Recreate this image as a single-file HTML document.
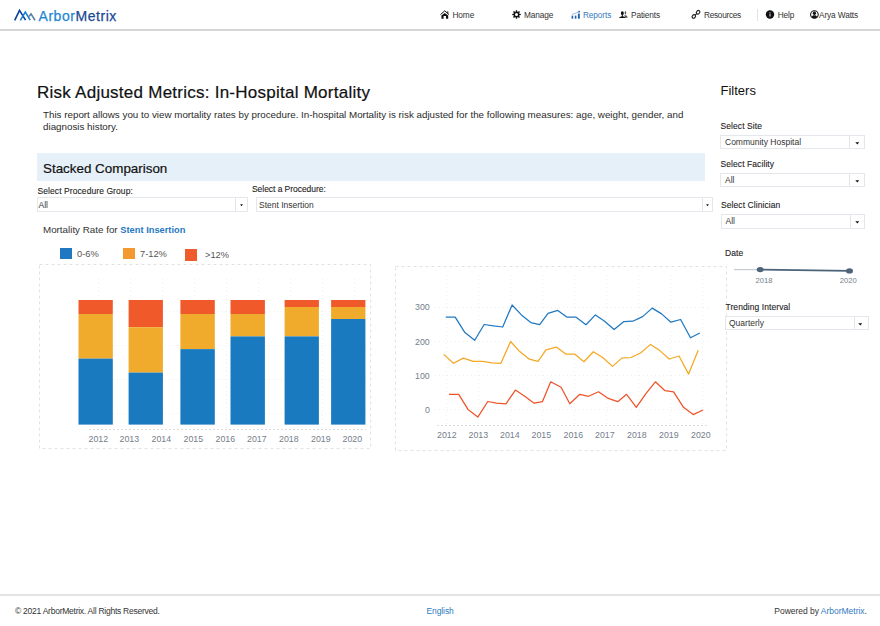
<!DOCTYPE html>
<html><head><meta charset="utf-8">
<style>
*{margin:0;padding:0;box-sizing:border-box}
html,body{width:880px;height:626px;overflow:hidden;background:#fff;font-family:"Liberation Sans",sans-serif;color:#222}
.a{position:absolute;white-space:nowrap}
#hdr{position:absolute;left:0;top:0;width:880px;height:29px;background:#fff}
#hdrline{position:absolute;left:0;top:29px;width:880px;height:2px;background:#d6d6d6}
.nav{position:absolute;top:10px;font-size:8.3px;letter-spacing:-0.12px;color:#333;line-height:10px}
.sel{position:absolute;border:1px solid #e4e8ec;background:#fff}
.sel .sep{position:absolute;top:0;bottom:0;width:1px;background:#e2e6ea}
.sel .arr{position:absolute}
.lbl{position:absolute;font-size:8.5px;color:#222;line-height:10px;-webkit-text-stroke:0.1px #222;letter-spacing:0.08px}
.stxt{position:absolute;font-size:8.5px;color:#333;line-height:10px}
.yr{position:absolute;font-size:8.8px;color:#737e8a;line-height:10px}
</style></head><body>
<div id="hdr">
  <svg class="a" style="left:12px;top:7px" width="26" height="16" viewBox="12 7 26 16">
    <polyline points="14.7,20.3 19.5,10.4 25.6,20.2" fill="none" stroke="#0b3d9c" stroke-width="1.6"/>
    <polyline points="20.3,20.3 25.3,12.1 30.2,20.2" fill="none" stroke="#1b82d2" stroke-width="1.6"/>
    <polyline points="29.1,16.4 31,13.9 35,20.2" fill="none" stroke="#5f7f9f" stroke-width="1.6"/>
  </svg>
  <div class="a" style="left:38.5px;top:6.5px;font-size:14px;line-height:18px;letter-spacing:0.55px;-webkit-text-stroke:0.25px currentColor"><span style="color:#1f86d4;-webkit-text-stroke:0.25px #1f86d4">Arbor</span><span style="color:#1a4893;-webkit-text-stroke:0.25px #1a4893">Metrix</span></div>

  <!-- nav -->
  <svg class="a" style="left:438px;top:6px" width="20" height="18" viewBox="438 6 20 18"><path d="M440.5 14.6 L444.75 10.8 L449 14.6" fill="none" stroke="#111" stroke-width="1"/><rect x="447.3" y="11.3" width="1" height="2" fill="#111"/><path d="M441.4 18.7 L441.4 15.4 L444.75 12.9 L448.2 15.4 L448.2 18.7 L446 18.7 L446 15.9 L443.6 15.9 L443.6 18.7 Z" fill="#111"/></svg>
  <div class="nav" style="left:452.5px">Home</div>
  <svg class="a" style="left:511.8px;top:10.2px" width="9" height="9" viewBox="-4.5 -4.5 9 9"><g fill="#111"><circle r="2.75"/><g id="tt"><path d="M-0.6 -4.3 L0.6 -4.3 L1 -2.3 L-1 -2.3 Z"/></g><use href="#tt" transform="rotate(45)"/><use href="#tt" transform="rotate(90)"/><use href="#tt" transform="rotate(135)"/><use href="#tt" transform="rotate(180)"/><use href="#tt" transform="rotate(225)"/><use href="#tt" transform="rotate(270)"/><use href="#tt" transform="rotate(315)"/></g><circle r="1.5" fill="#fff"/></svg>
  <div class="nav" style="left:524px">Manage</div>
  <svg class="a" style="left:568px;top:6px" width="20" height="18" viewBox="568 6 20 18"><g fill="#1f63ad"><rect x="571.6" y="15.6" width="1.6" height="3.1"/><rect x="574.8" y="15.6" width="1.6" height="3.1"/><rect x="577.9" y="13.6" width="1.9" height="5.1"/><rect x="578.2" y="10.9" width="1.7" height="1.6"/></g><polyline points="572.2,14.3 575,13.5 577,12.6 578.8,11.6" fill="none" stroke="#7fa6d0" stroke-width="0.8"/></svg>
  <div class="nav" style="left:583px;color:#3a7cc0">Reports</div>
  <svg class="a" style="left:615px;top:6px" width="20" height="18" viewBox="615 6 20 18"><path d="M626.2 12.6 C626.2 11.8 625.9 11.3 625.4 11.3 C624.9 11.3 624.7 11.9 624.7 12.8 C624.7 13.7 625 14.6 625.5 14.6 C626 14.6 626.2 13.6 626.2 12.6 Z M624 15.6 L626 15.2 C627 15.6 627.5 16.4 627.6 17.7 L625.5 17.7 Z" fill="#555"/><path d="M622.3 11.2 C621.3 11.2 620.9 12 620.9 13.1 C620.9 14.3 621.5 15.2 621.9 15.4 L621.9 16.2 C620.6 16.5 619.4 17 619.1 17.9 L625.6 17.9 C625.3 17 624.1 16.5 622.8 16.2 L622.8 15.4 C623.2 15.2 623.8 14.3 623.8 13.1 C623.8 12 623.3 11.2 622.3 11.2 Z" fill="#111"/></svg>
  <div class="nav" style="left:631px">Patients</div>
  <svg class="a" style="left:688px;top:6px" width="20" height="18" viewBox="688 6 20 18"><g fill="none" stroke="#222" stroke-width="1.15"><ellipse cx="693.8" cy="16.4" rx="1.9" ry="1.55" transform="rotate(-45 693.8 16.4)"/><ellipse cx="698.1" cy="12.3" rx="1.9" ry="1.55" transform="rotate(-45 698.1 12.3)"/><line x1="695" y1="15.2" x2="696.8" y2="13.6"/></g></svg>
  <div class="nav" style="left:704px;letter-spacing:-0.3px">Resources</div>
  <div class="a" style="left:757px;top:9px;width:1px;height:12px;background:#e3e3e3"></div>
  <svg class="a" style="left:762px;top:6px" width="20" height="18" viewBox="762 6 20 18"><circle cx="770" cy="14.5" r="4.2" fill="#111"/><rect x="769.5" y="12.3" width="1" height="1.1" fill="#ddd"/><rect x="769.5" y="13.9" width="1" height="2.6" fill="#ddd"/></svg>
  <div class="nav" style="left:777.7px">Help</div>
  <svg class="a" style="left:805px;top:6px" width="20" height="18" viewBox="805 6 20 18"><circle cx="814.4" cy="14.5" r="3.8" fill="none" stroke="#111" stroke-width="1.1"/><ellipse cx="814.4" cy="13.2" rx="1.6" ry="1.8" fill="#111"/><path d="M811.6 17.3 C812 15.8 813.1 15.3 814.4 15.3 C815.7 15.3 816.8 15.8 817.2 17.3 C816.5 18 815.5 18.3 814.4 18.3 C813.3 18.3 812.3 18 811.6 17.3 Z" fill="#111"/></svg>
  <div class="nav" style="left:819px">Arya Watts</div>
</div>
<div id="hdrline"></div>

<!-- title -->
<div class="a" style="left:37px;top:82.5px;font-size:17px;letter-spacing:0.25px;line-height:20px;color:#111;-webkit-text-stroke:0.2px #111">Risk Adjusted Metrics: In-Hospital Mortality</div>
<div class="a" style="left:43px;top:108.6px;font-size:9.8px;line-height:12px;color:#2b2b2b;white-space:normal;width:660px">This report allows you to view mortality rates by procedure. In-hospital Mortality is risk adjusted for the following measures: age, weight, gender, and<br>diagnosis history.</div>

<!-- section -->
<div class="a" style="left:37px;top:153px;width:668px;height:28px;background:#e6f0f8"></div>
<div class="a" style="left:43px;top:160.5px;font-size:13.4px;line-height:16px;color:#111;-webkit-text-stroke:0.2px #111">Stacked Comparison</div>

<div class="lbl" style="left:37.5px;top:186px">Select Procedure Group:</div>
<div class="sel" style="left:37px;top:197px;width:211px;height:15px"><div class="sep" style="left:196.5px"></div><svg class="arr" style="left:200.8px;top:5px" width="5" height="5" viewBox="0 0 5 5"><polygon points="1.1,1.3 3.9,1.3 2.5,3.2" fill="#111"/></svg></div>
<div class="stxt" style="left:38.5px;top:199.5px">All</div>
<div class="lbl" style="left:252px;top:183.5px;letter-spacing:-0.05px">Select a Procedure:</div>
<div class="sel" style="left:256px;top:197px;width:457px;height:15px"><div class="sep" style="left:445px"></div><svg class="arr" style="left:448px;top:5px" width="5" height="5" viewBox="0 0 5 5"><polygon points="1.1,1.3 3.9,1.3 2.5,3.2" fill="#111"/></svg></div>
<div class="stxt" style="left:259px;top:199.5px">Stent Insertion</div>

<div class="a" style="left:43px;top:224px;font-size:9.8px;line-height:12px;color:#333">Mortality Rate for <b style="color:#1f78c1;font-size:9.3px">Stent Insertion</b></div>

<!-- legend -->
<div class="a" style="left:60px;top:248px;width:12px;height:11px;background:#1f78c1"></div>
<div class="a" style="left:77px;top:248px;font-size:9.3px;line-height:12px;color:#555">0-6%</div>
<div class="a" style="left:123px;top:248px;width:12px;height:11px;background:#f3992f"></div>
<div class="a" style="left:140px;top:248px;font-size:9.3px;line-height:12px;color:#555">7-12%</div>
<div class="a" style="left:185px;top:249px;width:12px;height:11.5px;background:#f05b2b"></div>
<div class="a" style="left:205px;top:249px;font-size:9.3px;line-height:12px;color:#555">&gt;12%</div>

<!-- bar chart -->
<svg class="a" style="left:0;top:0" width="880" height="626">
  <rect x="39.5" y="264.5" width="331" height="184" fill="none" stroke="#e2e2e2" stroke-width="1" stroke-dasharray="3,3"/>
  <g stroke="#efefef" stroke-width="1" stroke-dasharray="1,3">
    <line x1="98.5" y1="279" x2="98.5" y2="429"/>
    <line x1="130.5" y1="279" x2="130.5" y2="429"/>
    <line x1="162.5" y1="279" x2="162.5" y2="429"/>
    <line x1="194.5" y1="279" x2="194.5" y2="429"/>
    <line x1="226.5" y1="279" x2="226.5" y2="429"/>
    <line x1="258.5" y1="279" x2="258.5" y2="429"/>
    <line x1="290.5" y1="279" x2="290.5" y2="429"/>
    <line x1="322.5" y1="279" x2="322.5" y2="429"/>
    <line x1="354.5" y1="279" x2="354.5" y2="429"/>
    <line x1="89" y1="311.5" x2="366" y2="311.5"/>
    <line x1="89" y1="345.5" x2="366" y2="345.5"/>
    <line x1="89" y1="379.5" x2="366" y2="379.5"/>
    <line x1="89" y1="413.5" x2="366" y2="413.5"/>
  </g>
  <line x1="89" y1="429.5" x2="366" y2="429.5" stroke="#dcdcdc" stroke-width="1" stroke-dasharray="2,2"/>
  <!-- bars: x, w, top, r/o, o/b, bottom -->
  <g>
    <rect x="78.5" y="300" width="34.3" height="14" fill="#f05a2b"/>
    <rect x="78.5" y="314" width="34.3" height="44.6" fill="#f0ab2c"/>
    <rect x="78.5" y="358.6" width="34.3" height="66" fill="#1a7abf"/>

    <rect x="128.6" y="300" width="34.3" height="27.2" fill="#f05a2b"/>
    <rect x="128.6" y="327.2" width="34.3" height="45.4" fill="#f0ab2c"/>
    <rect x="128.6" y="372.6" width="34.3" height="52" fill="#1a7abf"/>

    <rect x="180.4" y="300" width="34.4" height="14" fill="#f05a2b"/>
    <rect x="180.4" y="314" width="34.4" height="35.1" fill="#f0ab2c"/>
    <rect x="180.4" y="349.1" width="34.4" height="75.5" fill="#1a7abf"/>

    <rect x="230.5" y="300" width="34.4" height="14" fill="#f05a2b"/>
    <rect x="230.5" y="314" width="34.4" height="22.4" fill="#f0ab2c"/>
    <rect x="230.5" y="336.4" width="34.4" height="88.2" fill="#1a7abf"/>

    <rect x="284.6" y="300" width="34.3" height="7" fill="#f05a2b"/>
    <rect x="284.6" y="307" width="34.3" height="29.4" fill="#f0ab2c"/>
    <rect x="284.6" y="336.4" width="34.3" height="88.2" fill="#1a7abf"/>

    <rect x="331.1" y="300" width="34.3" height="7" fill="#f05a2b"/>
    <rect x="331.1" y="307" width="34.3" height="12" fill="#f0ab2c"/>
    <rect x="331.1" y="319" width="34.3" height="105.6" fill="#1a7abf"/>
  </g>

  <!-- line chart container -->
  <rect x="395.5" y="266.5" width="331" height="184" fill="none" stroke="#e2e2e2" stroke-width="1" stroke-dasharray="3,3"/>
  <g stroke="#efefef" stroke-width="1" stroke-dasharray="1,3">
    <line x1="446.5" y1="275" x2="446.5" y2="424"/>
    <line x1="478.5" y1="275" x2="478.5" y2="424"/>
    <line x1="510.5" y1="275" x2="510.5" y2="424"/>
    <line x1="542.5" y1="275" x2="542.5" y2="424"/>
    <line x1="574.5" y1="275" x2="574.5" y2="424"/>
    <line x1="606.5" y1="275" x2="606.5" y2="424"/>
    <line x1="638.5" y1="275" x2="638.5" y2="424"/>
    <line x1="670.5" y1="275" x2="670.5" y2="424"/>
    <line x1="702.5" y1="275" x2="702.5" y2="424"/>
    <line x1="435" y1="307.5" x2="708" y2="307.5"/>
    <line x1="435" y1="341.5" x2="708" y2="341.5"/>
    <line x1="435" y1="375.5" x2="708" y2="375.5"/>
    <line x1="435" y1="409.5" x2="708" y2="409.5"/>
  </g>
  <line x1="437" y1="425.5" x2="708" y2="425.5" stroke="#dcdcdc" stroke-width="1" stroke-dasharray="2,2"/>
  <polyline fill="none" stroke="#1f78c1" stroke-width="1.25" stroke-linejoin="round" points="445.8,317.2 455.2,317.2 464.9,332.6 474.7,340.3 484.2,324.5 493.6,325.9 502.7,327 512.1,305 521.4,314.9 530.8,322.6 539.7,324.7 548,313.3 557.8,310.4 567.1,317.2 576.1,317.2 586,324.7 595.4,314.9 604.6,321.2 614.1,329.5 623.9,321.6 632.8,321.2 642.6,316.6 652.2,308.1 661.6,313.9 670.9,322.2 680.6,319.5 690.5,337.8 699.8,333"/>
  <polyline fill="none" stroke="#f4a823" stroke-width="1.25" stroke-linejoin="round" points="443.7,354.4 453.5,363.3 463.3,358.1 473.2,361.4 482.6,361.4 491.9,362.9 500.9,363.3 510.6,341.5 519.5,351.3 529.3,359.2 538,361.4 546,349.8 556.3,347.1 565.7,354 574.6,354 584,361.7 593.3,351.7 602.7,357.5 612.5,366.4 621.8,358.1 631.2,357.5 640.9,352.7 650.5,344.4 659.8,350.6 669.2,359 679,356 688.6,374.1 698.2,350.2"/>
  <polyline fill="none" stroke="#f0532a" stroke-width="1.25" stroke-linejoin="round" points="448.9,394.3 458.7,394.3 468,409.4 477.8,417.1 487.8,401.5 496.5,403.2 506,403.8 515.4,390.1 524.7,396.3 534.1,403.2 542.4,401.7 550.7,381.8 561.1,387.2 569.8,403.8 579.8,394.3 588.5,396.3 598.5,391.8 608.3,398.4 617.7,401.7 626.6,394.3 636.3,407.3 645.7,393.8 655.4,381.8 665,390.7 673.6,391.8 683.5,407.3 693.2,414.6 703,410"/>

  <!-- slider -->
  <line x1="734" y1="269.6" x2="760" y2="269.6" stroke="#c9cdd1" stroke-width="1.3"/>
  <line x1="760" y1="269.6" x2="849.5" y2="270.9" stroke="#4a6379" stroke-width="1.6"/>
  <ellipse cx="760.2" cy="269.6" rx="3.5" ry="2.7" fill="#4d657a"/>
  <ellipse cx="849.5" cy="270.9" rx="3.5" ry="2.7" fill="#4d657a"/>
</svg>

<!-- bar chart x labels -->
<div class="yr" style="left:88.5px;top:434px">2012</div>
<div class="yr" style="left:119.5px;top:434px">2013</div>
<div class="yr" style="left:151.5px;top:434px">2014</div>
<div class="yr" style="left:183.5px;top:434px">2015</div>
<div class="yr" style="left:215.5px;top:434px">2016</div>
<div class="yr" style="left:247px;top:434px">2017</div>
<div class="yr" style="left:279px;top:434px">2018</div>
<div class="yr" style="left:311px;top:434px">2019</div>
<div class="yr" style="left:342.5px;top:434px">2020</div>

<!-- line chart labels -->
<div class="yr" style="left:415px;top:302px">300</div>
<div class="yr" style="left:415px;top:336.5px">200</div>
<div class="yr" style="left:415px;top:371px">100</div>
<div class="yr" style="left:425px;top:405px">0</div>
<div class="yr" style="left:437px;top:430px">2012</div>
<div class="yr" style="left:468.5px;top:430px">2013</div>
<div class="yr" style="left:500px;top:430px">2014</div>
<div class="yr" style="left:531.5px;top:430px">2015</div>
<div class="yr" style="left:563.5px;top:430px">2016</div>
<div class="yr" style="left:595px;top:430px">2017</div>
<div class="yr" style="left:627px;top:430px">2018</div>
<div class="yr" style="left:659px;top:430px">2019</div>
<div class="yr" style="left:691px;top:430px">2020</div>

<!-- filters -->
<div class="a" style="left:720.5px;top:83px;font-size:13px;line-height:15px;color:#111">Filters</div>
<div class="lbl" style="left:720.5px;top:120.5px">Select Site</div>
<div class="sel" style="left:720px;top:134.5px;width:145px;height:14.5px"><div class="sep" style="left:128px"></div><svg class="arr" style="left:133.5px;top:5.0px" width="6" height="5" viewBox="0 0 6 5"><polygon points="0.3,1.2 4.3,1.2 2.3,3.6" fill="#111"/></svg></div>
<div class="stxt" style="left:725px;top:136.5px">Community Hospital</div>
<div class="lbl" style="left:720.5px;top:158.5px">Select Facility</div>
<div class="sel" style="left:720px;top:172.5px;width:145px;height:14.5px"><div class="sep" style="left:128px"></div><svg class="arr" style="left:133.5px;top:5.0px" width="6" height="5" viewBox="0 0 6 5"><polygon points="0.3,1.2 4.3,1.2 2.3,3.6" fill="#111"/></svg></div>
<div class="stxt" style="left:725px;top:174.5px">All</div>
<div class="lbl" style="left:721px;top:200px">Select Clinician</div>
<div class="sel" style="left:721px;top:214px;width:144px;height:14.5px"><div class="sep" style="left:127.5px"></div><svg class="arr" style="left:133.0px;top:5.0px" width="6" height="5" viewBox="0 0 6 5"><polygon points="0.3,1.2 4.3,1.2 2.3,3.6" fill="#111"/></svg></div>
<div class="stxt" style="left:725.5px;top:216px">All</div>
<div class="lbl" style="left:725px;top:248px">Date</div>
<div class="yr" style="left:755.5px;top:275.5px;font-size:7.6px">2018</div>
<div class="yr" style="left:839.8px;top:276px;font-size:7.6px">2020</div>
<div class="lbl" style="left:725.5px;top:302px">Trending Interval</div>
<div class="sel" style="left:725px;top:315.5px;width:144px;height:14.5px"><div class="sep" style="left:127.5px"></div><svg class="arr" style="left:132.0px;top:5.0px" width="6" height="5" viewBox="0 0 6 5"><polygon points="0.3,1.2 4.3,1.2 2.3,3.6" fill="#111"/></svg></div>
<div class="stxt" style="left:729px;top:317.5px">Quarterly</div>

<!-- footer -->
<div class="a" style="left:0;top:594px;width:880px;height:2px;background:#e4e4e4"></div>
<div class="a" style="left:15px;top:605.5px;font-size:8.5px;letter-spacing:-0.25px;line-height:11px;color:#333">© 2021 ArborMetrix. All Rights Reserved.</div>
<div class="a" style="left:426.5px;top:605.5px;font-size:8.5px;letter-spacing:-0.1px;line-height:11px;color:#2f7bc2">English</div>
<div class="a" style="left:774.3px;top:605.5px;font-size:8.5px;letter-spacing:-0.02px;line-height:11px;color:#333">Powered by <span style="color:#2f7bc2">ArborMetrix</span>.</div>
</body></html>
